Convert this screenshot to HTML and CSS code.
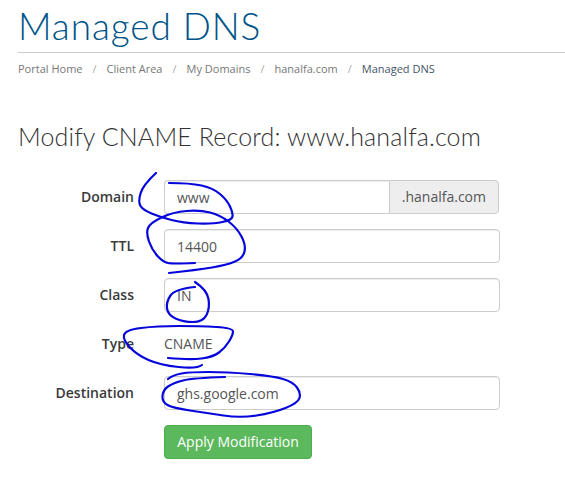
FILE: index.html
```html
<!DOCTYPE html>
<html lang="en">
<head>
<meta charset="utf-8">
<title>Managed DNS</title>
<link rel="stylesheet" href="styles.css">
</head>
<body>
<header class="page-header">
  <h1 class="page-title">Managed DNS</h1>
</header>
<nav class="crumbs">
  <a class="crumb">Portal Home</a><span class="sep">/</span>
  <a class="crumb">Client Area</a><span class="sep">/</span>
  <a class="crumb">My Domains</a><span class="sep">/</span>
  <a class="crumb">hanalfa.com</a><span class="sep">/</span>
  <span class="crumb-current">Managed DNS</span>
</nav>
<h2 class="section-title">Modify CNAME Record: www.hanalfa.com</h2>
<form class="record-form">
  <div class="row">
    <label class="label">Domain</label>
    <div class="input-group">
      <input class="field field-joined" value="www">
      <span class="addon">.hanalfa.com</span>
    </div>
  </div>
  <div class="row">
    <label class="label">TTL</label>
    <input class="field" value="14400">
  </div>
  <div class="row">
    <label class="label">Class</label>
    <input class="field" value="IN">
  </div>
  <div class="row">
    <label class="label">Type</label>
    <span class="static">CNAME</span>
  </div>
  <div class="row">
    <label class="label">Destination</label>
    <input class="field" value="ghs.google.com">
  </div>
  <div class="row">
    <span class="label"></span>
    <button class="btn" type="button">Apply Modification</button>
  </div>
</form>
<svg class="scribbles" width="565" height="491" viewBox="0 0 565 491" aria-hidden="true">
  <path d="M156 173Q143 185 140.5 193.5Q138 202 140.5 206Q143 210 151.5 213.5Q160 217 171.5 220Q183 223 198 223.5Q213 224 222.5 222Q232 220 232.5 216.5Q233 213 230 206.5Q227 200 220 194Q213 188 201.5 185.5Q190 183 169 183"/>
  <path d="M195 263Q173 264 168 263Q163 262 157.5 256Q152 250 149 241.5Q146 233 148 228Q150 223 161.5 217.5Q173 212 186.5 211Q200 210 210 212.5Q220 215 228.5 221.5Q237 228 241.5 236.5Q246 245 244.5 251.5Q243 258 235 261.5Q227 265 212 267.5Q197 270 169 273"/>
  <path d="M195 282Q207 290 208.5 299Q210 308 206.5 315Q203 322 193 322Q183 322 175.5 318.5Q168 315 167 308.5Q166 302 170.5 295.5Q175 289 195 287"/>
  <path d="M168 358Q190 360 201.5 358.5Q213 357 219 352.5Q225 348 229 341.5Q233 335 233 331.5Q233 328 216.5 327Q200 326 178.5 326Q157 326 141 328Q125 330 124 335Q123 340 130 347.5Q137 355 148.5 360Q160 365 178.5 367Q197 369 202 365"/>
  <path d="M225 377Q193 378 183 380.5Q173 383 168 386.5Q163 390 162.5 396Q162 402 167.5 405Q173 408 190 410.5Q207 413 223.5 415.5Q240 418 256.5 415.5Q273 413 285.5 408Q298 403 299.5 398Q301 393 297 387.5Q293 382 283 379Q273 376 250 374Q227 372 208.5 372Q190 372 181.5 373.5Q173 375 168 379"/>
</svg>
</body>
</html>
```
FILE: styles.css
```css
* { box-sizing: border-box; }
html, body { margin: 0; padding: 0; }
body {
  position: relative;
  width: 565px;
  height: 491px;
  overflow: hidden;
  background: #fff;
  font-family: "Open Sans", "Liberation Sans", sans-serif;
  font-size: 14px;
  color: #333;
}
.page-header {
  margin-left: 18px;
  height: 53px;
  border-bottom: 1px solid #ccc;
}
.page-title {
  margin: 0;
  font-family: Lato, "Open Sans", sans-serif;
  font-weight: 300;
  font-size: 37px;
  letter-spacing: .9px;
  line-height: 52px;
  color: #058;
}
.crumbs {
  display: flex;
  align-items: center;
  margin: 7px 0 0 18px;
  height: 16px;
  font-size: 11px;
  color: #777;
}
.sep { margin: 0 10px; color: #aaa; }
.crumb { color: #777; }
.crumb-current { color: #456; }
.section-title {
  margin: 43px 0 0 18px;
  font-family: Lato, "Open Sans", sans-serif;
  font-weight: 300;
  font-size: 25px;
  letter-spacing: .14px;
  line-height: 34px;
  color: #333;
}
.record-form {
  display: flex;
  flex-direction: column;
  gap: 15px;
  margin-top: 27px;
}
.row {
  display: flex;
  align-items: center;
  gap: 30px;
  height: 34px;
}
.label {
  width: 134px;
  padding-bottom: 2px;
  text-align: right;
  font-weight: 600;
  color: #3a3a3a;
}
.field {
  width: 336px;
  height: 34px;
  padding: 6px 12px;
  border: 1px solid #ccc;
  border-radius: 4px;
  box-shadow: inset 0 1px 1px rgba(0, 0, 0, .075);
  font: inherit;
  color: #555;
  background: #fff;
}
.input-group { display: flex; width: 335px; height: 34px; }
.field-joined {
  flex: 1;
  width: auto;
  min-width: 0;
  border-radius: 4px 0 0 4px;
  border-right: 0;
}
.addon {
  display: flex;
  align-items: center;
  padding: 0 12px 2px;
  border: 1px solid #ccc;
  border-radius: 0 4px 4px 0;
  background: #eee;
  color: #555;
}
.static { padding-bottom: 2px; color: #555; }
.btn {
  width: 148px;
  height: 34px;
  padding: 0 0 2px;
  border: 1px solid #4cae4c;
  border-radius: 4px;
  background: #5cb85c;
  color: #fff;
  font: inherit;
}
.scribbles {
  position: absolute;
  top: 0;
  left: 0;
  pointer-events: none;
}
.scribbles path {
  fill: none;
  stroke: #0505dc;
  stroke-width: 2.2;
  stroke-linecap: round;
  stroke-linejoin: round;
}
```
